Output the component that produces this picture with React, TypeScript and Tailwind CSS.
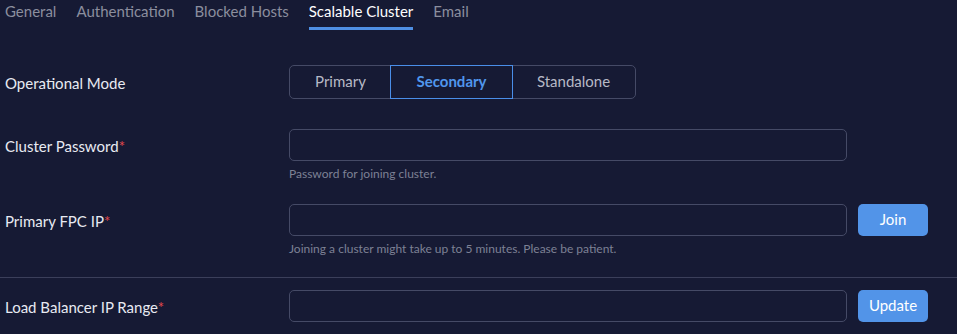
import React from 'react';

const tabs = ['General', 'Authentication', 'Blocked Hosts', 'Scalable Cluster', 'Email'];
const modes = ['Primary', 'Secondary', 'Standalone'];

function Label({ text, required }: { text: string; required?: boolean }) {
  return (
    <div className="w-[284px] shrink-0 pt-[3px] text-[15px] text-[#e8eaf2]">
      {text}
      {required && <span className="text-[#e5484d]">*</span>}
    </div>
  );
}

function TextField() {
  return <input className="h-[32px] w-[558px] rounded-[5px] border border-[#454a66] bg-transparent px-3 text-sm text-white outline-none" />;
}

export default function App() {
  const active = 'Scalable Cluster';
  const mode = 'Secondary';

  return (
    <div className="h-[334px] w-[957px] overflow-hidden bg-[#161a34] font-['Lato',sans-serif]">
      <div className="flex gap-5 pl-[5px]">
        {tabs.map((t) => (
          <div
            key={t}
            className={`pb-[4px] text-[15px] border-b-[3px] ${
              t === active ? 'border-[#4f8fe3] text-white' : 'border-transparent text-[#8b8e9e]'
            }`}
          >
            {t}
          </div>
        ))}
      </div>

      <div className="mt-[35px] flex items-center pl-[5px]">
        <Label text="Operational Mode" />
        <div className="flex h-[34px] rounded-[5px] border border-[#454a66]">
          {modes.map((m, i) => (
            <div
              key={m}
              className={`flex items-center justify-center text-[15px] ${
                i === 0 ? 'w-[101px]' : i === 1 ? 'w-[121px]' : 'w-[123px]'
              } ${
                m === mode
                  ? 'shadow-[0_0_0_1px_#4a8ee8] font-bold text-[#5096ec]'
                  : 'text-[#b6b9c6]'
              }`}
            >
              {m}
            </div>
          ))}
        </div>
      </div>

      <div className="mt-[30px] flex pl-[5px]">
        <div className="flex h-[32px] items-center">
          <Label text="Cluster Password" required />
        </div>
        <div>
          <TextField />
          <div className="mt-[5px] text-[12px] leading-[16px] text-[#7d8194]">Password for joining cluster.</div>
        </div>
      </div>

      <div className="mt-[22px] flex pl-[5px]">
        <div className="flex h-[32px] items-center">
          <Label text="Primary FPC IP" required />
        </div>
        <div>
          <div className="flex gap-[11px]">
            <TextField />
            <button className="h-[32px] w-[70px] rounded-[5px] bg-[#5294e8] text-[15px] text-white">Join</button>
          </div>
          <div className="mt-[5px] text-[12px] leading-[16px] text-[#7d8194]">
            Joining a cluster might take up to 5 minutes. Please be patient.
          </div>
        </div>
      </div>

      <div className="mt-[20px] border-t border-[#3b3f5a]" />

      <div className="mt-[12px] flex items-center pl-[5px]">
        <Label text="Load Balancer IP Range" required />
        <div className="flex gap-[11px]">
          <TextField />
          <button className="h-[32px] w-[70px] rounded-[5px] bg-[#5294e8] text-[15px] text-white">Update</button>
        </div>
      </div>
    </div>
  );
}
